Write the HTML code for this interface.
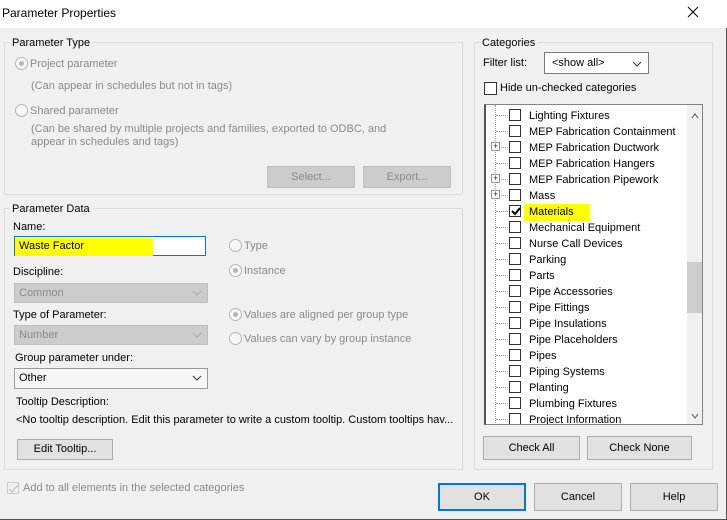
<!DOCTYPE html><html><head><style>
*{margin:0;padding:0;box-sizing:border-box}
body{width:727px;height:520px;background:#f0f0f0;font-family:"Liberation Sans",sans-serif;font-size:11px;color:#000;position:relative;overflow:hidden;border-right:1px solid #555;border-bottom:1px solid #555}
.a{position:absolute;white-space:nowrap;line-height:17px}
.g{color:#8a8a8a}
.grp{position:absolute;border:1px solid #dcdcdc}
.lg{position:absolute;background:#f0f0f0;padding:0 2px;line-height:17px}
.rad{position:absolute;width:13px;height:13px;border-radius:50%;border:1px solid #b5b5b5;background:#f7f7f7}
.rad.on::after{content:"";position:absolute;left:3px;top:3px;width:5px;height:5px;border-radius:50%;background:#b5b5b5}
.btn{position:absolute;border:1px solid #adadad;background:#e1e1e1;text-align:center}
.btn.d{background:#cccccc;border-color:#bfbfbf;color:#8a8a8a}
.sel{position:absolute;border:1px solid #bfbfbf;background:#cccccc;color:#8a8a8a;padding-left:4px}
.cb{position:absolute;width:11px;height:11px;border:1px solid #333;background:#fff}
.row{position:absolute;left:0;height:16px;width:200px}
.row span{position:absolute;left:43px;top:1px;line-height:16px}
.row i{position:absolute;left:23px;top:2px;width:12px;height:12px;border:1px solid #333;background:#fff}
.row b{position:absolute;left:10px;top:8px;width:12px;border-top:1px dotted #999}
.pl{position:absolute;left:5px;top:3px;width:9px;height:9px;border:1px solid #999;background:#fff;font-size:9px;line-height:7px;text-align:center;color:#236;z-index:2}
</style></head><body>
<div class="a" style="left:0;top:0;width:727px;height:28px;background:#fff"></div>
<div class="a" style="left:2px;top:5px;font-size:12px">Parameter Properties</div>
<svg class="a" style="left:687px;top:6px" width="12" height="12"><path d="M1 1L11 11M11 1L1 11" stroke="#000" stroke-width="1"/></svg>

<div class="grp" style="left:4px;top:42px;width:459px;height:153px"></div>
<div class="lg" style="left:10px;top:35px">Parameter Type</div>
<div class="rad on" style="left:15px;top:57px"></div><div class="a g" style="left:30px;top:56px">Project parameter</div>
<div class="a g" style="left:31px;top:78px">(Can appear in schedules but not in tags)</div>
<div class="rad" style="left:15px;top:104px"></div><div class="a g" style="left:30px;top:103px">Shared parameter</div>
<div class="a g" style="left:31px;top:121px">(Can be shared by multiple projects and families, exported to ODBC, and</div>
<div class="a g" style="left:31px;top:134px">appear in schedules and tags)</div>
<div class="btn d" style="left:267px;top:166px;width:88px;height:22px;line-height:20px">Select...</div>
<div class="btn d" style="left:363px;top:166px;width:88px;height:22px;line-height:20px">Export...</div>

<div class="grp" style="left:4px;top:208px;width:459px;height:262px"></div>
<div class="lg" style="left:10px;top:201px">Parameter Data</div>
<div class="a" style="left:13px;top:219px">Name:</div>
<div class="a" style="left:14px;top:236px;width:192px;height:20px;background:#fff;border:1px solid #0078d7"></div>
<div class="a" style="left:15px;top:238px;width:138px;height:18px;background:#ffff00"></div>
<div class="a" style="left:19px;top:238px">Waste Factor</div>
<div class="rad" style="left:229px;top:239px"></div><div class="a g" style="left:244px;top:238px">Type</div>
<div class="rad on" style="left:229px;top:264px"></div><div class="a g" style="left:244px;top:263px">Instance</div>
<div class="a" style="left:13px;top:264px">Discipline:</div>
<div class="sel" style="left:14px;top:283px;width:194px;height:20px;line-height:18px">Common</div>
<div class="a" style="left:13px;top:307px">Type of Parameter:</div>
<div class="sel" style="left:14px;top:325px;width:194px;height:20px;line-height:18px">Number</div>
<div class="rad on" style="left:229px;top:308px"></div><div class="a g" style="left:244px;top:307px">Values are aligned per group type</div>
<div class="rad" style="left:229px;top:332px"></div><div class="a g" style="left:244px;top:331px">Values can vary by group instance</div>
<div class="a" style="left:15px;top:350px">Group parameter under:</div>
<div class="sel" style="left:14px;top:368px;width:194px;height:21px;line-height:19px;background:#f7f7f7;border-color:#999;color:#000">Other</div>
<svg class="a" style="left:192px;top:375px" width="10" height="6"><path d="M1 1L5 5L9 1" stroke="#333" fill="none"/></svg>
<svg class="a" style="left:192px;top:290px" width="10" height="6"><path d="M1 1L5 5L9 1" stroke="#aaa" fill="none"/></svg>
<svg class="a" style="left:192px;top:332px" width="10" height="6"><path d="M1 1L5 5L9 1" stroke="#aaa" fill="none"/></svg>
<div class="a" style="left:16px;top:394px">Tooltip Description:</div>
<div class="a" style="left:16px;top:412px">&lt;No tooltip description. Edit this parameter to write a custom tooltip. Custom tooltips hav...</div>
<div class="btn" style="left:17px;top:439px;width:96px;height:21px;line-height:19px">Edit Tooltip...</div>

<div class="a" style="left:7px;top:482px;width:12px;height:12px;border:1px solid #ccc;background:#f0f0f0"></div>
<svg class="a" style="left:8px;top:483px" width="11" height="11"><path d="M1 6L4 9L10 2" stroke="#bbb" fill="none"/></svg>
<div class="a g" style="left:23px;top:480px">Add to all elements in the selected categories</div>

<div class="btn" style="left:438px;top:483px;width:88px;height:28px;line-height:24px;border:2px solid #0078d7">OK</div>
<div class="btn" style="left:534px;top:483px;width:88px;height:28px;line-height:26px">Cancel</div>
<div class="btn" style="left:630px;top:483px;width:88px;height:28px;line-height:26px">Help</div>

<div class="grp" style="left:474px;top:42px;width:239px;height:428px"></div>
<div class="lg" style="left:480px;top:35px">Categories</div>
<div class="a" style="left:483px;top:55px">Filter list:</div>
<div class="a" style="left:544px;top:52px;width:105px;height:22px;border:1px solid #7a7a7a;background:#fff;padding:2px 0 0 7px">&lt;show all&gt;</div>
<svg class="a" style="left:632px;top:61px" width="10" height="6"><path d="M1 1L5 5L9 1" stroke="#333" fill="none"/></svg>
<div class="cb" style="left:484px;top:82px;width:13px;height:13px"></div>
<div class="a" style="left:500px;top:80px">Hide un-checked categories</div>

<div class="a" style="left:484px;top:104px;width:219px;height:321px;background:#fff;border:1px solid #828282;border-left:2px solid #555;overflow:hidden">
<div class="a" style="left:9px;top:0;height:320px;border-left:1px dotted #999"></div>
<div class="a" style="left:201px;top:0;width:16px;height:320px;background:#f0f0f0"></div>
<div class="a" style="left:201px;top:157px;width:16px;height:51px;background:#cdcdcd"></div>
<svg class="a" style="left:205px;top:8px" width="8" height="6"><path d="M1 5L4 1L7 5" stroke="#555" fill="none"/></svg>
<svg class="a" style="left:205px;top:308px" width="8" height="6"><path d="M1 1L4 5L7 1" stroke="#555" fill="none"/></svg>
<div class="a" style="left:38px;top:99px;width:66px;height:17px;background:#ffff00"></div>
<div class="row" style="top:2px"><b></b><i></i><span>Lighting Fixtures</span></div>
<div class="row" style="top:18px"><b></b><i></i><span>MEP Fabrication Containment</span></div>
<div class="row" style="top:34px"><div class="pl">+</div><b></b><i></i><span>MEP Fabrication Ductwork</span></div>
<div class="row" style="top:50px"><b></b><i></i><span>MEP Fabrication Hangers</span></div>
<div class="row" style="top:66px"><div class="pl">+</div><b></b><i></i><span>MEP Fabrication Pipework</span></div>
<div class="row" style="top:82px"><div class="pl">+</div><b></b><i></i><span>Mass</span></div>
<div class="row" style="top:98px"><b></b><i></i><svg class="a" style="left:25px;top:4px" width="10" height="9"><path d="M1 4L4 7L9 1" stroke="#000" stroke-width="2" fill="none"/></svg><span>Materials</span></div>
<div class="row" style="top:114px"><b></b><i></i><span>Mechanical Equipment</span></div>
<div class="row" style="top:130px"><b></b><i></i><span>Nurse Call Devices</span></div>
<div class="row" style="top:146px"><b></b><i></i><span>Parking</span></div>
<div class="row" style="top:162px"><b></b><i></i><span>Parts</span></div>
<div class="row" style="top:178px"><b></b><i></i><span>Pipe Accessories</span></div>
<div class="row" style="top:194px"><b></b><i></i><span>Pipe Fittings</span></div>
<div class="row" style="top:210px"><b></b><i></i><span>Pipe Insulations</span></div>
<div class="row" style="top:226px"><b></b><i></i><span>Pipe Placeholders</span></div>
<div class="row" style="top:242px"><b></b><i></i><span>Pipes</span></div>
<div class="row" style="top:258px"><b></b><i></i><span>Piping Systems</span></div>
<div class="row" style="top:274px"><b></b><i></i><span>Planting</span></div>
<div class="row" style="top:290px"><b></b><i></i><span>Plumbing Fixtures</span></div>
<div class="row" style="top:306px"><b></b><i></i><span>Project Information</span></div>
</div>
<div class="btn" style="left:483px;top:436px;width:97px;height:24px;line-height:22px">Check All</div>
<div class="btn" style="left:587px;top:436px;width:105px;height:24px;line-height:22px">Check None</div>
</body></html>
